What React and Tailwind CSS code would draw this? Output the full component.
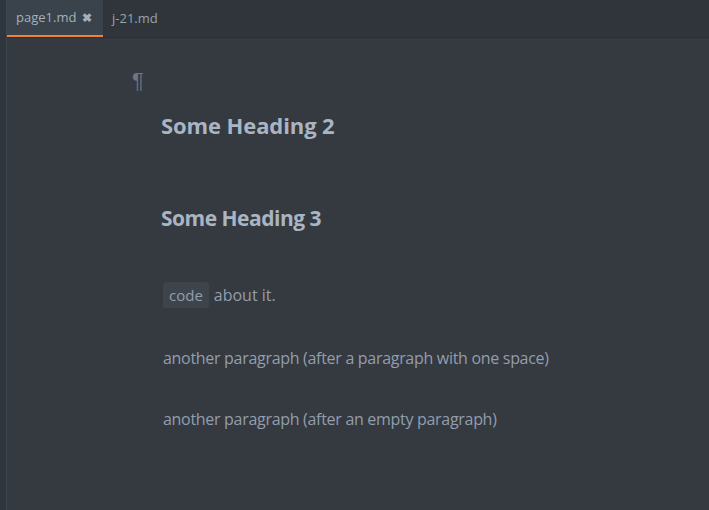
export default function App() {
  const font = { fontFamily: '"Open Sans", "Noto Sans", sans-serif' };
  return (
    <div className="w-[709px] h-[510px] flex bg-[#353940] overflow-hidden" style={font}>
      <div className="w-[7px] h-full bg-[#2f353c] border-r border-[#3e454d]" />
      <div className="flex-1 flex flex-col">
        <div className="h-[38px] flex bg-[#30353b] border-b border-[#2c3036]">
          <div className="w-[96px] h-full bg-[#3a424b] border-b-2 border-[#f0823a] flex items-center pl-[9px] gap-[6px] text-[13px] text-[#a3b0bd]">
            <span>page1.md</span>
            <span className="text-[12px] font-bold">✖</span>
          </div>
          <div className="h-full flex items-center pl-[9px] text-[13px] text-[#97a3ae]">j-21.md</div>
        </div>
        <div className="flex-1 relative">
          <span className="absolute left-[125px] top-[30px] text-[22px] leading-[26px] font-light text-[#6d757e]" style={{ fontFamily: '"Liberation Sans", sans-serif' }}>¶</span>
          <div className="pl-[154px] pt-[72px] flex flex-col">
            <div className="text-[22px] font-bold text-[#a9b5c3] tracking-[-0.1px] leading-[30px]">Some Heading 2</div>
            <div className="mt-[63px] text-[21px] font-bold text-[#a9b5c3] tracking-[-0.5px] leading-[30px]">Some Heading 3</div>
            <div className="mt-[49px] pl-[2px] text-[16px] text-[#929ead] leading-[24px] flex items-center">
              <span className="bg-[#3e444c] rounded-[3px] px-[6px] py-[1px] text-[15px] mr-[5px]">code</span>
              <span>about it.</span>
            </div>
            <div className="mt-[38px] pl-[2px] text-[16px] text-[#929ead] leading-[24px] tracking-[-0.3px]">another paragraph (after a paragraph with one space)</div>
            <div className="mt-[37px] pl-[2px] text-[16px] text-[#929ead] leading-[24px] tracking-[-0.3px]">another paragraph (after an empty paragraph)</div>
          </div>
        </div>
      </div>
    </div>
  );
}
